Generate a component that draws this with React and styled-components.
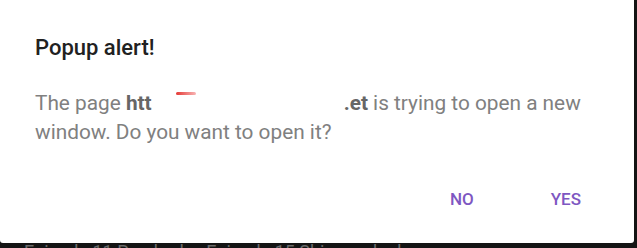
import React from "react";
import styled, { createGlobalStyle } from "styled-components";

const Global = createGlobalStyle`
  html, body { margin: 0; padding: 0; background: #141414; }
  body { width: 637px; height: 248px; overflow: hidden; font-family: Roboto, "Noto Sans", sans-serif; }
`;

const Screen = styled.div`
  width: 637px;
  height: 248px;
  display: flex;
  flex-direction: column;
  background: #141414;
`;

const Dialog = styled.div`
  width: 634px;
  height: 243px;
  flex: none;
  background: #ffffff;
  border-radius: 0 0 3px 3px;
  box-sizing: border-box;
  padding: 35px 0 0 35px;
  display: flex;
  flex-direction: column;
`;

const Title = styled.h2`
  margin: 0;
  font-family: Roboto, sans-serif;
  font-weight: 500;
  font-size: 22px;
  line-height: 26px;
  color: #212121;
`;

const Body = styled.p`
  margin: 28px 0 0 0;
  width: 580px;
  font-family: Roboto, sans-serif;
  font-size: 20.8px;
  line-height: 29px;
  color: #808080;
`;

const Bold = styled.b`
  font-weight: 700;
  color: #666666;
`;

const Redacted = styled.span`
  display: inline-block;
  position: relative;
  width: 192px;
  height: 1px;
`;

const RedMark = styled.span`
  position: absolute;
  left: 24px;
  top: -17px;
  width: 20px;
  height: 3px;
  border-radius: 2px;
  background: linear-gradient(90deg, #e53935, #f8b4b4);
`;

const Actions = styled.div`
  margin-top: auto;
  margin-bottom: 34px;
  padding-right: 45px;
  display: flex;
  justify-content: flex-end;
  gap: 61px;
`;

const Button = styled.button`
  border: none;
  background: transparent;
  padding: 0 8px;
  font-family: Roboto, sans-serif;
  font-weight: 500;
  font-size: 17px;
  line-height: 20px;
  color: #7e57c2;
  text-transform: uppercase;
  cursor: pointer;
`;

const Footer = styled.div`
  flex: 1;
  overflow: hidden;
  padding-left: 24px;
  font-family: Roboto, sans-serif;
  font-size: 18px;
  line-height: 18px;
  color: #6a6a6a;
  white-space: nowrap;
`;

export default function App() {
  return (
    <Screen>
      <Global />
      <Dialog>
        <Title>Popup alert!</Title>
        <Body>
          The page <Bold>htt</Bold>
          <Redacted>
            <RedMark />
          </Redacted>
          <Bold>.et</Bold> is trying to open a new window. Do you want to open it?
        </Body>
        <Actions>
          <Button>No</Button>
          <Button>Yes</Button>
        </Actions>
      </Dialog>
      <Footer>Episode 11 Pemberley        Episode 15 Shipwrecked</Footer>
    </Screen>
  );
}
